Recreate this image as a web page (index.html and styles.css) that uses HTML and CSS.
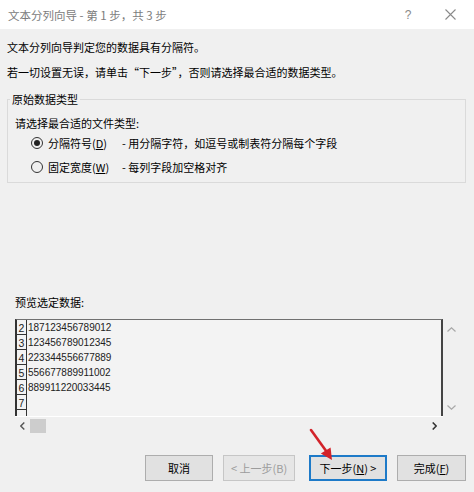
FILE: index.html
```html
<!DOCTYPE html>
<html lang="zh-CN">

<head>
  <meta charset="UTF-8">
  <meta name="viewport" content="width=device-width, initial-scale=1.0">
  <title>文本分列向导</title>
  <link rel="stylesheet" href="styles.css">
</head>

<body>
  <!-- Title bar -->
  <div class="titlebar">
    <span class="title">文本分列向导 - 第 1 步，共 3 步</span>
    <span class="help">?</span>
    <span class="close">
      <svg width="11" height="11" viewBox="0 0 11 11"><path d="M0.5 0.5L10.5 10.5M10.5 0.5L0.5 10.5" stroke="#8a8a8a" stroke-width="1.1" fill="none"/></svg>
    </span>
  </div>

  <div class="dialog">
    <p class="line first">文本分列向导判定您的数据具有分隔符。</p>
    <p class="line">若一切设置无误，请单击“下一步”，否则请选择最合适的数据类型。</p>

    <fieldset class="group">
      <legend>原始数据类型</legend>
      <div class="prompt">请选择最合适的文件类型:</div>
      <label class="option first">
        <span class="radio checked"></span>
        <span class="name">分隔符号(<u>D</u>)</span>
        <span class="desc">- 用分隔字符，如逗号或制表符分隔每个字段</span>
      </label>
      <label class="option">
        <span class="radio"></span>
        <span class="name">固定宽度(<u>W</u>)</span>
        <span class="desc">- 每列字段加空格对齐</span>
      </label>
    </fieldset>

    <div class="preview-label">预览选定数据:</div>

    <!-- Preview of the data -->
    <div class="preview">
      <div class="grid">
        <div class="row"><span class="num">2</span><span class="cell">187123456789012</span></div>
        <div class="row"><span class="num">3</span><span class="cell">123456789012345</span></div>
        <div class="row"><span class="num">4</span><span class="cell">223344556677889</span></div>
        <div class="row"><span class="num">5</span><span class="cell">556677889911002</span></div>
        <div class="row"><span class="num">6</span><span class="cell">889911220033445</span></div>
        <div class="row"><span class="num">7</span><span class="cell"></span></div>
        <div class="row"><span class="num"></span><span class="cell"></span></div>
      </div>
      <div class="vscroll">
        <svg width="9" height="5" viewBox="0 0 9 5"><path d="M0.5 4.5L4.5 0.8L8.5 4.5" stroke="#a8a8a8" stroke-width="1.2" fill="none"/></svg>
        <svg width="9" height="5" viewBox="0 0 9 5"><path d="M0.5 0.5L4.5 4.2L8.5 0.5" stroke="#a8a8a8" stroke-width="1.2" fill="none"/></svg>
      </div>
      <div class="hscroll">
        <svg width="5" height="8" viewBox="0 0 5 8"><path d="M4.3 0.5L0.8 4L4.3 7.5" stroke="#555" stroke-width="1.4" fill="none"/></svg>
        <span class="thumb"></span>
        <svg class="right" width="5" height="8" viewBox="0 0 5 8"><path d="M0.7 0.5L4.2 4L0.7 7.5" stroke="#333" stroke-width="1.6" fill="none"/></svg>
      </div>
      <div class="corner"></div>
    </div>

    <div class="buttons">
      <button class="cancel">取消</button>
      <button class="back" disabled>&lt; 上一步(B)</button>
      <button class="next">下一步(<u>N</u>) &gt;</button>
      <button class="finish">完成(<u>F</u>)</button>
    </div>
  </div>

  <!-- Red annotation arrow -->
  <svg class="arrow" width="35" height="40" viewBox="0 0 35 40">
    <path d="M6 5L21.5 26.5" stroke="#d2232a" stroke-width="2.6" fill="none" stroke-linecap="round"/>
    <polygon points="27,35 15.8,28.6 25.6,22.4" fill="#d2232a"/>
  </svg>
</body>

</html>
```

FILE: styles.css
```css
body {
  margin: 0;
  width: 474px;
  height: 492px;
  overflow: hidden;
  position: relative;
  background-color: #f0f0f0;
  font-family: "Noto Sans CJK SC", "Liberation Sans", sans-serif;
  font-size: 11px;
  color: #000;
}

.titlebar {
  height: 29px;
  background-color: #fff;
  display: flex;
  align-items: center;
  padding-left: 8px;
  color: #7c7c7c;
  font-size: 11.5px;
}

.title {
  flex: 1;
}

.help {
  width: 10px;
  text-align: center;
  margin-right: 32px;
  font-family: "Liberation Sans", sans-serif;
  font-size: 12px;
  color: #8a8a8a;
}

.close {
  display: flex;
  margin-right: 18px;
}

.dialog {
  padding: 0 8px 0 7px;
}

.line {
  margin: 9px 0 0;
  line-height: 16px;
}

.line.first {
  margin-top: 10px;
}

.group {
  margin: 11px 0 0;
  padding: 0 0 7px 2px;
  border: 1px solid #dadada;
  min-width: 0;
}

.group legend {
  padding: 0 2px;
  line-height: 16px;
}

.prompt {
  margin: 8px 0 0 5px;
  line-height: 16px;
}

.option {
  display: flex;
  align-items: center;
  line-height: 16px;
  margin: 8px 0 0 21px;
}

.option.first {
  margin-top: 4px;
}

.radio {
  box-sizing: border-box;
  width: 12px;
  height: 12px;
  border: 1px solid #333;
  border-radius: 50%;
  margin-right: 5px;
  display: flex;
  align-items: center;
  justify-content: center;
}

.radio.checked::after {
  content: "";
  width: 6px;
  height: 6px;
  border-radius: 50%;
  background-color: #222;
}

.name {
  width: 74px;
}

.preview-label {
  margin: 111px 0 0 8px;
  line-height: 16px;
}

.preview {
  margin: 9px 0 0 8px;
  display: grid;
  grid-template-columns: 428px 17px;
  grid-template-rows: 97px 18px;
  width: 445px;
}

.grid {
  box-sizing: border-box;
  border-top: 1px solid #707070;
  border-left: 2px solid #333;
  border-right: 2px solid #444;
  background-color: #f3f3f3;
  overflow: hidden;
}

.row {
  display: flex;
  height: 15px;
}

.num {
  box-sizing: border-box;
  width: 10px;
  height: 15px;
  border-right: 1px solid #333;
  border-bottom: 1px solid #333;
  font-family: "Liberation Sans", sans-serif;
  font-size: 10.5px;
  line-height: 16px;
  text-align: center;
  color: #222;
}

.cell {
  padding-left: 1px;
  font-family: "Liberation Sans", sans-serif;
  font-size: 10px;
  line-height: 15px;
  color: #222;
}

.vscroll {
  display: flex;
  flex-direction: column;
  align-items: center;
  justify-content: space-between;
  padding: 8px 0 6px;
}

.hscroll {
  display: flex;
  align-items: center;
  border-top: 1px solid #fff;
  padding: 0 6px 0 5px;
}

.thumb {
  width: 16px;
  height: 14px;
  margin-left: 5px;
  background-color: #cdcdcd;
}

.hscroll .right {
  margin-left: auto;
}

.buttons {
  display: flex;
  justify-content: flex-end;
  margin-top: 21px;
}

button {
  box-sizing: border-box;
  height: 26px;
  padding: 0;
  font-family: inherit;
  font-size: 11px;
  color: #000;
  background-color: #e1e1e1;
  border: 1px solid #adadad;
}

.cancel {
  width: 68px;
  margin-right: 10px;
}

.back {
  width: 72px;
  margin-right: 14px;
  color: #9c9c9c;
  background-color: #e6e6e6;
  border-color: #c6c6c6;
}

.next {
  width: 78px;
  margin-right: 10px;
  border: 2px solid #1d7ac8;
}

.finish {
  width: 69px;
}

.arrow {
  position: absolute;
  left: 305px;
  top: 425px;
}
```
